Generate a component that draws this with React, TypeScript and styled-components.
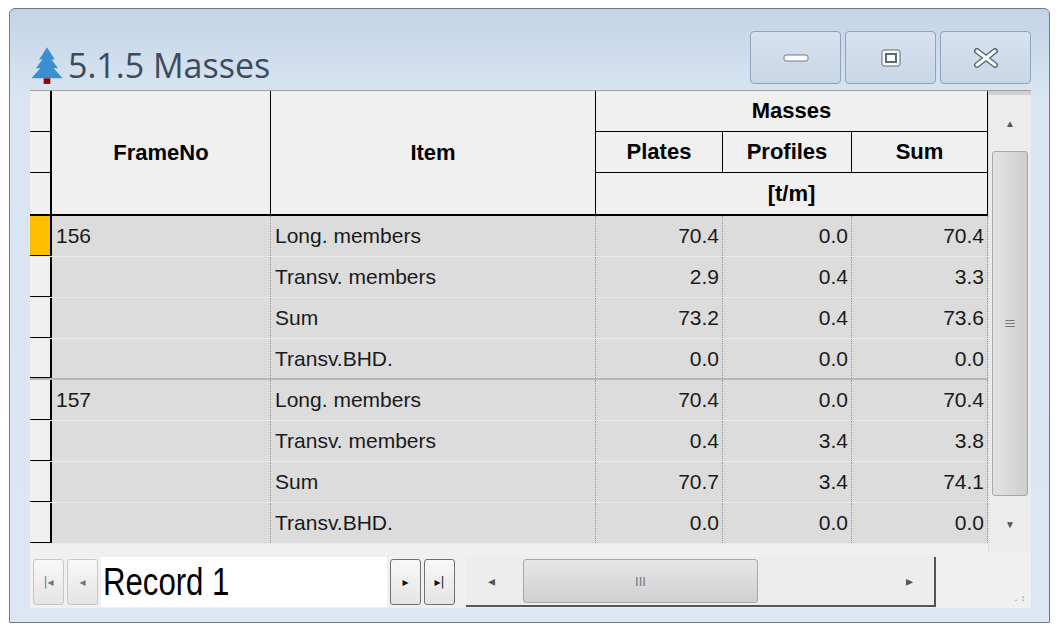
import styled, { createGlobalStyle } from "styled-components";

const Global = createGlobalStyle`
  body { margin: 0; background: #fff; }
  * { box-sizing: border-box; }
`;

const rows = [
  { frame: "156", item: "Long. members", v: ["70.4", "0.0", "70.4"], current: true },
  { frame: "", item: "Transv. members", v: ["2.9", "0.4", "3.3"] },
  { frame: "", item: "Sum", v: ["73.2", "0.4", "73.6"] },
  { frame: "", item: "Transv.BHD.", v: ["0.0", "0.0", "0.0"], groupEnd: true },
  { frame: "157", item: "Long. members", v: ["70.4", "0.0", "70.4"] },
  { frame: "", item: "Transv. members", v: ["0.4", "3.4", "3.8"] },
  { frame: "", item: "Sum", v: ["70.7", "3.4", "74.1"] },
  { frame: "", item: "Transv.BHD.", v: ["0.0", "0.0", "0.0"] },
];

const COLS = "22px 219px 325px 127px 129px 136px";

export default function App() {
  return (
    <Page>
      <Global />
      <Window>
        <TitleBar>
          <Title>
            <svg width="34" height="40" viewBox="0 0 30 36">
              <polygon points="15,2 22,13 19,13 25,21 21,21 29,30 1,30 9,21 5,21 11,13 8,13" fill="#3a8fd0" />
              <rect x="12" y="30" width="6" height="5" fill="#8b0000" />
            </svg>
            5.1.5 Masses
          </Title>
          <Controls>
            <WinButton>
              <svg width="26" height="10"><rect x="1" y="2" width="24" height="6" rx="2" fill="#fff" stroke="#6b7a8c" /></svg>
            </WinButton>
            <WinButton>
              <svg width="20" height="18"><rect x="1" y="1" width="18" height="16" rx="2" fill="#fff" stroke="#5a6a7c" /><rect x="5" y="5" width="10" height="8" fill="none" stroke="#5a6a7c" strokeWidth="2" /></svg>
            </WinButton>
            <WinButton>
              <svg width="26" height="20" viewBox="0 0 26 20">
                <path d="M4 3 L22 17 M22 3 L4 17" stroke="#5a6a7c" strokeWidth="6" strokeLinecap="round" />
                <path d="M4 3 L22 17 M22 3 L4 17" stroke="#fff" strokeWidth="3" strokeLinecap="round" />
              </svg>
            </WinButton>
          </Controls>
        </TitleBar>
        <Client>
          <GridArea>
            <Grid>
              <Header>
                <Sel $row={1} />
                <Sel $row={2} />
                <Sel $row={3} />
                <HCell $col="2" $row="1 / 4">FrameNo</HCell>
                <HCell $col="3" $row="1 / 4">Item</HCell>
                <HCell $col="4 / 7" $row="1">Masses</HCell>
                <HCell $col="4" $row="2">Plates</HCell>
                <HCell $col="5" $row="2">Profiles</HCell>
                <HCell $col="6" $row="2">Sum</HCell>
                <HCell $col="4 / 7" $row="3">[t/m]</HCell>
              </Header>
              {rows.map((r, i) => (
                <Row key={i} $groupEnd={!!r.groupEnd}>
                  <RowSel $current={!!r.current} />
                  <Cell>{r.frame}</Cell>
                  <Cell>{r.item}</Cell>
                  {r.v.map((v, j) => (
                    <Cell key={j} $num>{v}</Cell>
                  ))}
                </Row>
              ))}
            </Grid>
            <VScroll>
              <ScrollArrow>▲</ScrollArrow>
              <VThumb>≡</VThumb>
              <ScrollArrow>▼</ScrollArrow>
            </VScroll>
          </GridArea>
          <NavBar>
            <NavBtn>|◂</NavBtn>
            <NavBtn>◂</NavBtn>
            <RecordBox><span>Record 1</span></RecordBox>
            <NavBtn $dark>▸</NavBtn>
            <NavBtn $dark>▸|</NavBtn>
            <HScroll>
              <Arrow>◂</Arrow>
              <HThumb>III</HThumb>
              <Arrow>▸</Arrow>
            </HScroll>
            <Grip>⠠⠰</Grip>
          </NavBar>
        </Client>
      </Window>
    </Page>
  );
}

const Page = styled.div`
  width: 1059px;
  height: 633px;
  padding: 8px 9px 10px 9px;
`;

const Window = styled.div`
  height: 100%;
  border: 1px solid #6f7b89;
  border-radius: 6px 6px 0 0;
  background: linear-gradient(#c3d4e7, #d9e5f2 90px, #dce7f3);
  padding: 0 18px 14px 20px;
  display: flex;
  flex-direction: column;
`;

const TitleBar = styled.div`
  height: 84px;
  display: flex;
  align-items: flex-start;
  justify-content: space-between;
`;

const Title = styled.div`
  display: flex;
  align-items: center;
  gap: 4px;
  margin-top: 36px;
  font: 34px "Open Sans", "Noto Sans", sans-serif;
  color: #3d4b5c;
  line-height: 40px;
`;

const Controls = styled.div`
  display: flex;
  gap: 4px;
  margin-top: 22px;
`;

const WinButton = styled.div`
  width: 91px;
  height: 53px;
  border: 1px solid #8ea3bd;
  border-radius: 4px;
  background: linear-gradient(#d7e2ef, #c8d6e7);
  display: flex;
  align-items: center;
  justify-content: center;
`;

const Client = styled.div`
  flex: 1;
  background: #f0f0f0;
  display: flex;
  flex-direction: column;
`;

const GridArea = styled.div`
  display: flex;
  height: 462px;
  border-top: 1px solid #a0a0a0;
`;

const Grid = styled.div`
  width: 958px;
  font: 21px "Liberation Sans", Arial, sans-serif;
  color: #000;
`;

const Header = styled.div`
  display: grid;
  grid-template-columns: ${COLS};
  grid-template-rows: 41px 41px 41px;
  border-bottom: 2px solid #000;
`;

const Sel = styled.div<{ $row: number }>`
  grid-column: 1;
  grid-row: ${(p) => p.$row};
  border-right: 2px solid #000;
  border-bottom: ${(p) => (p.$row < 3 ? "1.5px solid #000" : "none")};
  background: #f0f0f0;
`;

const HCell = styled.div<{ $col: string; $row: string }>`
  grid-column: ${(p) => p.$col};
  grid-row: ${(p) => p.$row};
  display: flex;
  align-items: center;
  justify-content: center;
  font-weight: bold;
  font-size: 22px;
  background: #f0f0f0;
  border-right: 1.5px solid #000;
  border-bottom: ${(p) => (p.$row === "1" || p.$row === "2" ? "1.5px solid #000" : "none")};
`;

const Row = styled.div<{ $groupEnd: boolean }>`
  display: grid;
  grid-template-columns: ${COLS};
  height: 41px;
  background: #dcdcdc;
  border-bottom: ${(p) => (p.$groupEnd ? "2px solid #b8b8b8" : "1px dotted #f4f4f4")};
`;

const RowSel = styled.div<{ $current: boolean }>`
  background: ${(p) => (p.$current ? "#ffbf00" : "#f0f0f0")};
  border-right: 2px solid #000;
  border-bottom: 1.5px solid #000;
`;

const Cell = styled.div<{ $num?: boolean }>`
  padding: 0 3px 0 4px;
  display: flex;
  align-items: center;
  justify-content: ${(p) => (p.$num ? "flex-end" : "flex-start")};
  border-right: 1px dotted #9a9a9a;
  color: #1a1a1a;
`;

const VScroll = styled.div`
  width: 43px;
  display: flex;
  flex-direction: column;
  align-items: center;
  background: #ececec;
  border-left: 1px solid #e0e0e0;
  border-top: 4px solid #d0d0d0;
`;

const ScrollArrow = styled.div`
  height: 56px;
  display: flex;
  align-items: center;
  justify-content: center;
  font-size: 10px;
  color: #555;
`;

const VThumb = styled.div`
  width: 36px;
  flex: 1;
  border: 1px solid #a8a8a8;
  border-radius: 3px;
  background: linear-gradient(90deg, #e2e2e2, #cfcfcf);
  display: flex;
  align-items: center;
  justify-content: center;
  color: #777;
  font-size: 20px;
`;

const NavBar = styled.div`
  margin-top: 4px;
  display: flex;
  align-items: center;
  height: 52px;
  padding-left: 3px;
  gap: 3px;
`;

const NavBtn = styled.div<{ $dark?: boolean }>`
  width: 31px;
  height: 46px;
  border: 1px solid ${(p) => (p.$dark ? "#707070" : "#c8c8c8")};
  border-radius: 3px;
  background: linear-gradient(#f8f8f8, #e4e4e4);
  display: flex;
  align-items: center;
  justify-content: center;
  font: 12px "DejaVu Sans", sans-serif;
  color: ${(p) => (p.$dark ? "#111" : "#777")};
`;

const RecordBox = styled.div`
  width: 286px;
  height: 50px;
  background: #fff;
  display: flex;
  align-items: center;
  padding-left: 2px;
  font: 38px "Liberation Sans", sans-serif;
  color: #000;
  overflow: hidden;

  span {
    display: inline-block;
    transform: scaleX(0.82);
    transform-origin: left center;
    white-space: nowrap;
  }
`;

const HScroll = styled.div`
  flex: 1;
  max-width: 470px;
  height: 50px;
  margin-left: 8px;
  display: flex;
  align-items: center;
  background: #ededed;
  border-right: 2px solid #555;
  border-bottom: 2px solid #555;
`;

const Arrow = styled.div`
  width: 50px;
  text-align: center;
  font-size: 14px;
  color: #555;
`;

const HThumb = styled.div`
  width: 235px;
  height: 44px;
  margin-left: 7px;
  margin-right: auto;
  border: 1px solid #a8a8a8;
  border-radius: 3px;
  background: linear-gradient(#e6e6e6, #d0d0d0);
  display: flex;
  align-items: center;
  justify-content: center;
  color: #777;
  font: 13px "Liberation Sans", sans-serif;
`;

const Grip = styled.div`
  margin-left: auto;
  align-self: flex-end;
  font-size: 10px;
  color: #aaa;
  padding: 0 6px 4px 0;
`;
